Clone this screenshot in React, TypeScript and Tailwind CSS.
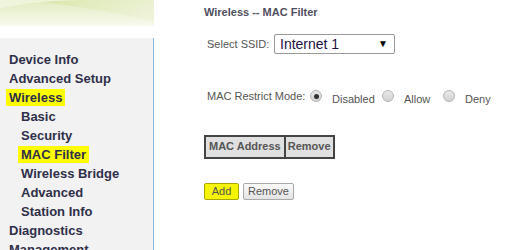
import React from 'react';

const menu = [
  { label: 'Device Info', sub: false },
  { label: 'Advanced Setup', sub: false },
  { label: 'Wireless', sub: false, hl: true },
  { label: 'Basic', sub: true },
  { label: 'Security', sub: true },
  { label: 'MAC Filter', sub: true, hl: true },
  { label: 'Wireless Bridge', sub: true },
  { label: 'Advanced', sub: true },
  { label: 'Station Info', sub: true },
  { label: 'Diagnostics', sub: false },
  { label: 'Management', sub: false },
];

function Radio({ checked }: { checked?: boolean }) {
  return (
    <span className="inline-flex h-[12px] w-[12px] flex-none items-center justify-center rounded-full border border-[#b5b5b5] bg-gradient-to-b from-[#e8e8e8] to-[#d2d2d2]">
      {checked && <span className="h-[5px] w-[5px] rounded-full bg-[#333]" />}
    </span>
  );
}

function Banner() {
  return (
    <svg width="154" height="26" viewBox="0 0 154 26" className="block flex-none">
      <defs>
        <linearGradient id="bg" x1="0" y1="0" x2="0" y2="1">
          <stop offset="0" stopColor="#e2ebc0" />
          <stop offset="1" stopColor="#f8faef" />
        </linearGradient>
        <linearGradient id="band" x1="0" y1="0" x2="1" y2="0">
          <stop offset="0" stopColor="#d5e3a0" stopOpacity="0.9" />
          <stop offset="1" stopColor="#eef3d8" stopOpacity="0.6" />
        </linearGradient>
      </defs>
      <rect width="154" height="26" fill="url(#bg)" />
      <path d="M30 0 C70 6 110 10 154 22 L154 0 Z" fill="url(#band)" />
      <path d="M0 8 C30 2 60 0 90 0 L0 0 Z" fill="#f2f6e2" opacity="0.8" />
    </svg>
  );
}

export default function App() {
  return (
    <div
      className="flex h-[250px] w-[527px] overflow-hidden bg-white text-[#4a4a4a]"
      style={{ fontFamily: '"Liberation Sans", Arial, sans-serif' }}
    >
      {/* 左侧菜单 */}
      <div className="flex w-[154px] flex-none flex-col">
        <Banner />
        <div className="h-[12px] flex-none bg-white" />
        <div className="flex-1 border-r border-[#8ab6e2] bg-[#f2f2f2] pt-[12px]">
          {menu.map((m) => (
            <div
              key={m.label}
              className={`${m.sub ? 'pl-[21px]' : 'pl-[9px]'} text-[13px] font-bold leading-[19px] text-[#2f2f4a]`}
            >
              <span className={m.hl ? '-mx-[3px] bg-[#ffff00] px-[3px] py-[1px]' : ''}>{m.label}</span>
            </div>
          ))}
        </div>
      </div>

      {/* 内容区 */}
      <div className="flex-1 pl-[50px] pt-[5px]">
        <div className="text-[11px] font-bold leading-[14px] text-[#4f4f5f]">Wireless -- MAC Filter</div>

        <div className="mt-[15px] ml-[3px] flex items-center">
          <span className="w-[67px] text-[11px] text-[#555]">Select SSID:</span>
          <div className="flex h-[20px] w-[121px] items-center justify-between rounded-[2px] border border-[#9a9a9a] bg-white pl-[5px] pr-[6px]">
            <span className="text-[14px] leading-none text-[#1c0f45]">Internet 1</span>
            <span className="text-[10px] leading-none text-black">▼</span>
          </div>
        </div>

        <div className="mt-[31px] ml-[3px] flex items-center text-[11px] text-[#555]">
          <span className="w-[103px]">MAC Restrict Mode:</span>
          <Radio checked />
          <span className="ml-[10px] mt-[6px] w-[50px]">Disabled</span>
          <Radio />
          <span className="ml-[10px] mt-[6px] w-[39px]">Allow</span>
          <Radio />
          <span className="ml-[10px] mt-[6px]">Deny</span>
        </div>

        <table className="mt-[27px] border-collapse border-2 border-[#444]">
          <tbody>
            <tr className="bg-[#e0e0e0] text-[11px] font-bold text-[#555]">
              <td className="h-[22px] border-2 border-[#444] px-[3px]">MAC Address</td>
              <td className="h-[22px] border-2 border-[#444] px-[2px]">Remove</td>
            </tr>
          </tbody>
        </table>

        <div className="mt-[24px] flex gap-[4px]">
          <button className="h-[17px] w-[35px] rounded-[2px] border border-[#a8a800] bg-[#f5f500] text-[11px] leading-none text-[#555]">
            Add
          </button>
          <button className="h-[17px] w-[51px] rounded-[2px] border border-[#aaa] bg-gradient-to-b from-[#fafafa] to-[#e4e4e4] text-[11px] leading-none text-[#555]">
            Remove
          </button>
        </div>
      </div>
    </div>
  );
}
